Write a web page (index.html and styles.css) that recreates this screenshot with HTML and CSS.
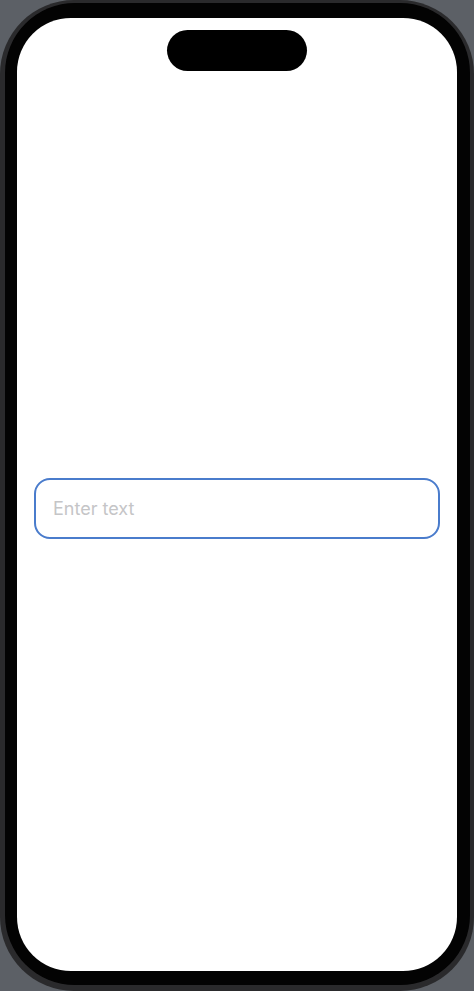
FILE: index.html
```html
<!DOCTYPE html>
<html lang="en">
<head>
<meta charset="utf-8">
<title>Text field</title>
<link rel="stylesheet" href="styles.css">
</head>
<body>
<div class="phone">
  <div class="bezel">
    <div class="screen">
      <div class="island"></div>
      <label class="field">
        <input class="field-input" type="text" placeholder="Enter text">
      </label>
    </div>
  </div>
</div>
</body>
</html>
```
FILE: styles.css
```css
html, body {
  margin: 0;
  padding: 0;
}
body {
  background: #5c6066;
  width: 474px;
  height: 991px;
  overflow: hidden;
  font-family: Inter, "Liberation Sans", Arial, sans-serif;
}
.phone {
  box-sizing: border-box;
  width: 474px;
  height: 991px;
  padding: 3px 4px 6px 5px;
  border-radius: 74px;
  background: #2a2a2c;
  display: flex;
}
.bezel {
  flex: 1;
  display: flex;
  padding: 15px 13px 14px 12px;
  border-radius: 70px;
  background: #030303;
}
.screen {
  flex: 1;
  background: #ffffff;
  border-radius: 54px;
  display: flex;
  flex-direction: column;
  align-items: center;
}
.island {
  width: 140px;
  height: 41px;
  margin-top: 12px;
  border-radius: 21px;
  background: #000;
}
.field {
  box-sizing: border-box;
  width: 406px;
  height: 61px;
  margin-top: 407px;
  border: 2px solid #4a7ccc;
  border-radius: 16px;
  display: flex;
  align-items: center;
  padding: 0 0 0 17px;
}
.field-input {
  flex: 1;
  border: none;
  outline: none;
  background: transparent;
  font-family: Inter, "Liberation Sans", Arial, sans-serif;
  font-size: 18px;
  color: #222;
  padding: 0;
}
.field-input::placeholder {
  color: #c5c5c7;
}
```
